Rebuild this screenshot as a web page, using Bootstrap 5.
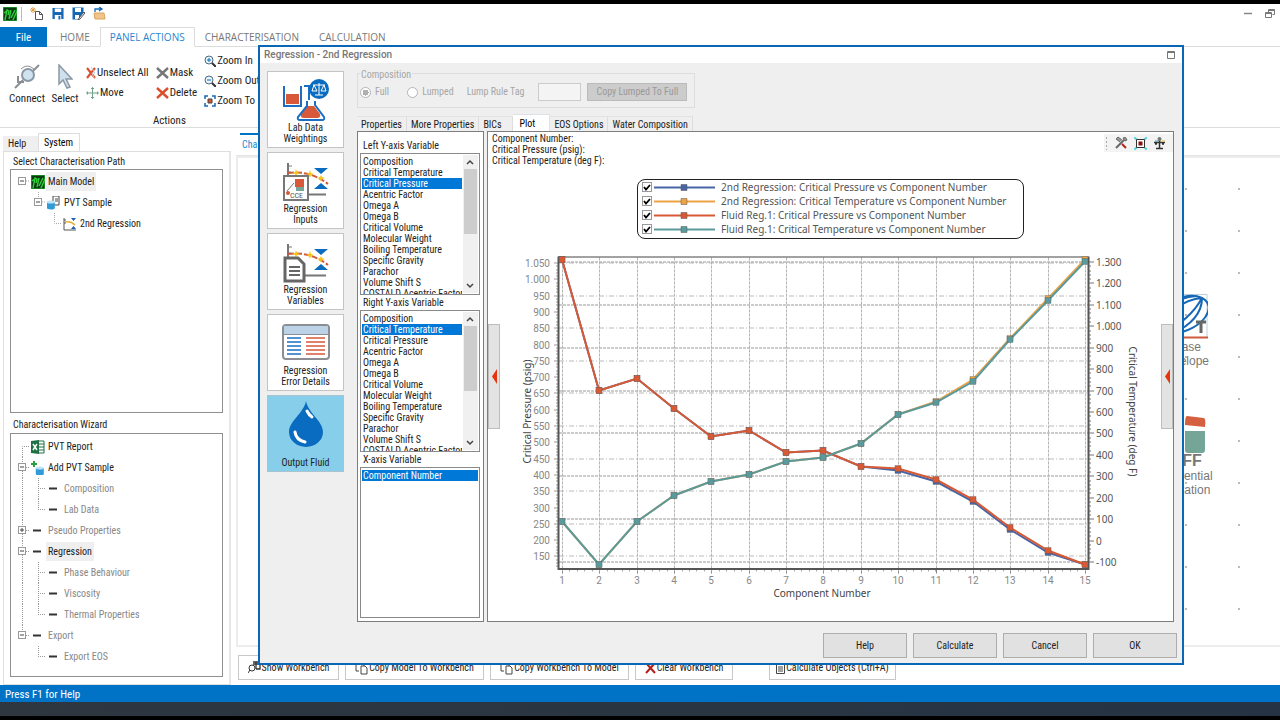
<!DOCTYPE html>
<html lang="en">
<head>
<meta charset="utf-8">
<meta name="viewport" content="width=device-width, initial-scale=1">
<title>Regression - 2nd Regression</title>
<link href="https://cdn.jsdelivr.net/npm/bootstrap@5.3.0/dist/css/bootstrap.min.css" rel="stylesheet">
<style>
:root{--ui:"Roboto Condensed","Roboto","Liberation Sans",sans-serif;--blue:#0173c7;--sel:#0078d7}
body{font:400 10px/12px var(--ui);color:#222;background:#fff;border-top:4px solid #000;border-bottom:4px solid #000;overflow:hidden}
button,input,select{font:inherit;color:inherit}
svg{display:block;flex:none}
.btn{--bs-btn-font-size:10px;--bs-btn-line-height:12px;--bs-btn-padding-x:0;--bs-btn-padding-y:0;--bs-btn-border-radius:0;--bs-btn-color:#222;font-family:var(--ui)}
/* application frame */
.quick{height:23px;padding:0 0 4px 3px}
.quick .sep{width:1px;height:14px;background:#bbb}
.win-icons{padding-right:4px;gap:13px}
.main-tabs{--bs-nav-tabs-border-color:#dcdcdc;--bs-nav-tabs-border-radius:0;--bs-nav-link-padding-x:9px;--bs-nav-link-padding-y:0;font:10px/20px "Open Sans","Roboto",sans-serif;height:20px}
.main-tabs .nav-link{color:#777;height:20px;line-height:19px;font-size:10px}
.main-tabs .nav-link.active{color:#2a86cf;border-color:#dcdcdc #dcdcdc #fff}
.main-tabs .file-tab{background:var(--blue);color:#fff;width:47px;font-family:var(--ui);font-size:11px}
.ribbon{height:81px;border-bottom:1px solid #dcdcdc;font-size:11px;padding-left:8px}
.ribbon .btn{--bs-btn-font-size:11px}
.rb-big{width:38px}
.rb-groups{height:67px;gap:5px}
.rb-col .btn{display:flex;align-items:center;gap:1px;height:20px;white-space:nowrap}
.left-dock{width:232px;padding:5px 0 0 3px}
.dock-tabs{--bs-nav-tabs-border-radius:0;--bs-nav-tabs-border-width:0;height:18px;align-items:end}
.dock-tabs .nav-link{padding:0 5px;height:15px;line-height:15px;background:#efefef;color:#222;font-size:10px;width:35px;text-align:left}
.dock-tabs .nav-link.active{height:18px;background:#fff;border:1px solid #ddd;border-bottom:0;width:42px;line-height:16px}
.dock-body{border:1px solid #dedede;border-right:2px solid #e6e6e6;padding:4px 6px 7px;margin-right:1px}
.dock-cap{padding-left:3px}
.tree-box{border:1px solid #8f8f8f;padding:1px 3px;list-style:none;margin:0}
.tree-box.wiz{height:244px;padding-top:2px}
.tree-box li{display:flex;height:21px;align-items:center}
.tree-box .ico{width:14px;margin:0 1px}
.tree-box .tx{padding:0 2px;line-height:19px}
.tree-box .off{color:#888}
.tree-box .on{background:#efefef}
.canvas-area{border:2px solid #ececec;border-right:0;background:radial-gradient(circle at 2px 2px,#bbb 1px,transparent 1px) right 43px top 29px/53px 42px;position:relative}
.canvas-head{height:28px;border-bottom:1px solid #e4e4e4;padding-left:4px}
.canvas-head a{color:#2a86cf;border-top:2px solid var(--blue);width:24px;height:22px;line-height:20px;padding-left:2px;text-decoration:none;font-size:10px}
.node{position:absolute;right:58px;font:12px/14px "Liberation Sans",sans-serif;color:#777;text-align:center;width:76px}
.node b{font-size:16px;line-height:15px}
.bench .btn{--bs-btn-border-color:#c8c8c8;height:25px;display:flex;align-items:center;justify-content:center;gap:1px}
.status{height:17px;background:var(--blue);color:#fff;font-size:11px;line-height:19px;padding-left:5px}
.taskbar{height:14px;background:linear-gradient(90deg,#2e3740,#253344)}
/* dialog */
.dlg{position:absolute;left:258px;top:45px;right:96px;bottom:55px;border:2px solid #0b66b5;background:#efefef;z-index:5}
.dlg-title{height:16px;background:#fff;padding:0 6px 0 4px;color:#777;font:500 10px/20px "Roboto",sans-serif}
.side{width:77px;gap:4px}
.tile{--bs-btn-border-color:#c4c4c4;--bs-btn-bg:#fff;height:77px;width:77px;line-height:11px;display:flex;flex-direction:column;align-items:center;justify-content:end;padding-bottom:3px;gap:0}
.tile.cur{--bs-btn-bg:#87ceeb;--bs-btn-border-color:#a9c4cf}
.grp{width:338px;height:35px;position:relative;border:1px solid #ddd;color:#a6a6a6}
.grp legend{font-size:10px;line-height:10px;position:absolute;top:-4px;left:2px;width:auto;background:#efefef;padding:0 1px;margin:0;float:none}
.grp-row{height:33px;padding:3px 0 0 2px}
.grp .form-check-input{width:11px;height:11px;margin:0;border:1px solid #b5b5b5;background:#fff;float:none;opacity:1}
.grp .form-check-input:checked{background:radial-gradient(circle,#b0b0b0 3px,#fff 3px)}
.grp .form-check-input[disabled]~label,.grp label{opacity:1}
.grp input[type=text]{width:43px;height:18px;border:1px solid #ccc;background:#f4f4f4;border-radius:0;padding:0 2px;min-height:0}
.grp .btn{--bs-btn-disabled-color:#999;--bs-btn-disabled-bg:#ccc;--bs-btn-disabled-border-color:#bbb;--bs-btn-disabled-opacity:1;width:100px;height:18px}
.pg-tabs{--bs-nav-tabs-border-radius:0;--bs-nav-tabs-border-width:0;height:17px;align-items:end}
.pg-tabs .nav-link{height:15px;line-height:15px;padding:0 4px;font-size:10px;color:#222;border-right:1px solid #ddd;border-top:1px solid #e2e2e2;text-align:left;white-space:nowrap}
.pg-tabs .nav-link.active{background:#fff;height:17px;width:37px;line-height:15px;padding-left:6px}
.pane{border:1px solid #7d7d7d;background:#fff}
.vars{width:127px;padding:6px 3px 3px 2px}
.vars label{padding-left:3px;height:15px;line-height:15px}
.lb{border:1px solid #8a8a8a;height:142px;display:flex;overflow:hidden}
.lb.fill{flex:1;height:auto}
.lb select{appearance:none;border:0;outline:0;background:#fff;padding:2px 1px 0;overflow:hidden;flex:1;min-width:0;height:100%;border-radius:0;scrollbar-width:none}
.lb select::-webkit-scrollbar{display:none}
.lb option{padding:0 1px;min-height:0;height:11px;line-height:11px;font-size:10px;overflow:hidden}
.lb option:checked{background:linear-gradient(var(--sel),var(--sel));-webkit-text-fill-color:#fff}
.sb{width:15px;background:#f0f0f0;margin:1px 1px 1px 0}
.sb .thumb{height:65px;background:#cdcdcd;margin:0 1px}
.plot-head{padding:1px 0 0 4px;line-height:11px}
.tools{background:#f3f3f3;height:18px;width:69px;margin-top:1px;gap:6px;padding-left:1px}
.legend-box{border:1px solid #222;border-radius:8px;width:387px;height:60px;padding:0 4px;margin:13px auto 0;font:10px/14px "Noto Sans","Open Sans",sans-serif;color:#555}
.legend-box .form-check-input{width:10px;height:10px;min-width:10px;margin:0;border:1px solid #999;border-radius:0;background:#fff}
.legend-box .form-check-input:checked{background:#fff url("data:image/svg+xml,%3Csvg xmlns='http://www.w3.org/2000/svg' viewBox='0 0 10 10'%3E%3Cpath d='M2 5l2 2.500L8 3' fill='none' stroke='%23000' stroke-width='1.800'/%3E%3C/svg%3E") center/10px}
.legend-box label{height:14px;gap:2px}
.grab{width:12px;height:105px;--bs-btn-bg:#e3e3e3;--bs-btn-border-color:#bdbdbd;margin-top:84px}
.chart{min-width:0;flex:1}
.chart svg{width:100%;height:100%}
.chart text{font:10px "Noto Sans",sans-serif;fill:#555}
.chart .lx{font-family:"Roboto","Liberation Sans",sans-serif;fill:#888}
.chart .ttl{font:10px "Noto Sans",sans-serif;fill:#444}
.foot{gap:6px;padding:11px 5px 5px}
.foot .btn{--bs-btn-bg:#e1e1e1;--bs-btn-border-color:#adadad;width:84px;height:25px}
</style>
</head>
<body class="d-flex flex-column vh-100">
<svg width="0" height="0" class="position-absolute">
<defs>
<g id="mn"><rect x="4.500" y="6.500" width="7" height="7" fill="#fff" stroke="#999"/><path d="M6 10h4" stroke="#444"/></g>
<g id="tri-plot"><path d="M6 2v33M6 33.500h38" stroke="#777" stroke-width="2" fill="none"/><path d="M6 5h4M6 11h3" stroke="#777"/><path d="M6 12q22-3 40 11" stroke="#cf5b3d" stroke-width="2" stroke-dasharray="6 2" fill="none"/><path d="M32 7h14l-7 6zM32 28h14l-7-6z" fill="#0a6cc0"/><path d="M14 8l1 3 3 1-3 1-1 3-1-3-3-1 3-1zM28 9l1 3 3 1-3 1-1 3-1-3-3-1 3-1zM39 14l1 2 3 1-3 1-1 3-1-3-3-1 3-1z" fill="#f5c518"/></g>
<g id="logo"><rect width="14" height="14" fill="#0b3a10"/><path d="M0 0h14v14H0z" fill="none" stroke="#28c83a"/><path d="M2 13l2-10 2 1-1 4M6 12l2-9M8 11l4-8M10 13l4-9M1 6l4-3" stroke="#2fd13a" stroke-width="1.400" fill="none"/></g>
<g id="drop"><path d="M1 5v8q5 3 10 0V5z" fill="#2f9bd8"/><ellipse cx="6" cy="5" rx="5" ry="2" fill="#bfe2f5"/></g>
<g id="pages"><path d="M4 2h5v3M1 1v9h3M4 2H1M6 5h4l2 2v6H6z" fill="none" stroke="#444"/></g>
</defs></svg>

<header class="quick d-flex align-items-center justify-content-between">
 <div class="d-flex align-items-center">
  <svg width="14" height="14" viewBox="0 0 14 14"><use href="#logo"/></svg>
  <span class="sep ms-1"></span>
  <svg class="ms-2" width="14" height="14" viewBox="0 0 14 14"><path d="M5.500 4.500h4l3 3v5h-7zM9.500 4.500v3h3" fill="#fff" stroke="#555"/><path d="M3 0v6M0 3h6M1 1l4 4M5 1L1 5" stroke="#e0a04a"/></svg>
  <svg class="ms-2" width="12" height="13" viewBox="0 0 13 13"><path d="M.500.500h12v12H.500z" fill="#1668b5"/><path d="M3 1h7v4H3zM3 8h7v5H3z" fill="#fff"/><path d="M7 9h2v4H7z" fill="#1668b5"/></svg>
  <svg class="ms-2" width="13" height="13" viewBox="0 0 13 13"><path d="M.500.500h11v6l-5 6h-6z" fill="#1668b5"/><path d="M3 1h6v4H3zM3 8h4v4H3z" fill="#fff"/><path d="M12 5l-5 6-1 2 2-1 5-6z" fill="#fff" stroke="#555"/></svg>
  <svg class="ms-2" width="13" height="13" viewBox="0 0 13 13"><path d="M1 6h10l1 6H2z" fill="#f1c588" stroke="#d9a45c"/><path d="M2 5V2h6M6 0l3 2-3 2" fill="none" stroke="#1668b5" stroke-width="1.300"/></svg>
 </div>
 <div class="win-icons d-flex align-items-center">
  <svg width="9" height="9" viewBox="0 0 9 9"><path d="M1 4.500h8" stroke="#888" stroke-width="1.500"/></svg>
  <svg width="11" height="10" viewBox="0 0 11 10"><path d="M3.500 3V.500h6v5H7.500M.500 3.500h6v5h-6zM.500 4.500h6M3.500 1.500h6" fill="none" stroke="#777"/></svg>
 </div>
</header>

<nav class="nav nav-tabs main-tabs">
 <button class="nav-link file-tab p-0 border-0">File</button>
 <button class="nav-link" style="padding-left:12px">HOME</button>
 <button class="nav-link active">PANEL ACTIONS</button>
 <button class="nav-link">CHARACTERISATION</button>
 <button class="nav-link">CALCULATION</button>
</nav>

<section class="ribbon d-flex">
 <div class="d-flex flex-column">
  <div class="rb-groups d-flex align-items-start">
   <div class="d-flex mt-3">
   <button class="btn rb-big"><svg width="26" height="25" viewBox="0 0 26 25" class="mx-auto"><path d="M1 24l8-8M18 8l7-7M4 12v6h6" stroke="#8b8f94" stroke-width="2" fill="none"/><circle cx="14" cy="11" r="6" fill="#cfe2f0" stroke="#8b98a3" stroke-width="2"/><path d="M7 5q6-6 13 0" stroke="#8b8f94" fill="none"/></svg><span class="d-block mt-1">Connect</span></button>
   <button class="btn rb-big"><svg width="16" height="25" viewBox="0 0 16 25" class="mx-auto"><path d="M2 1v19l4-4 4 8 3-1-4-8h6z" fill="#cfe0ec" stroke="#8b98a3" stroke-width="1.500"/></svg><span class="d-block mt-1">Select</span></button>
   </div>
   <div class="rb-col d-flex flex-column mt-3" style="margin-left:-4px">
    <button class="btn"><svg width="10" height="12" viewBox="0 0 10 12"><path d="M1 1l8 10M9 1L1 11" stroke="#d9512c" stroke-width="2.200"/><path d="M5 0l4 6-3 0 2 5" stroke="#c9cdd0" fill="none"/></svg>Unselect All</button>
    <button class="btn"><svg width="13" height="12" viewBox="0 0 13 12"><path d="M6.500 0v12M0 6h13M5 1.500h3M5 10.500h3M1.500 4.500v3M11.500 4.500v3" stroke="#6fa08a"/></svg>Move</button>
   </div>
   <div class="rb-col d-flex flex-column mt-3">
    <button class="btn"><svg width="13" height="12" viewBox="0 0 13 12"><path d="M1 1l11 10M12 1L1 11" stroke="#777" stroke-width="2.400"/></svg>Mask</button>
    <button class="btn"><svg width="13" height="12" viewBox="0 0 13 12"><path d="M1 1l11 10M12 1L1 11" stroke="#d9512c" stroke-width="2.400"/></svg>Delete</button>
   </div>
   <div class="rb-col d-flex flex-column mt-1">
    <button class="btn"><svg width="12" height="12" viewBox="0 0 12 12"><circle cx="5" cy="5" r="4" fill="#e8f3fa" stroke="#4a6b80"/><path d="M8 8l4 4" stroke="#333" stroke-width="2"/><path d="M3 5h4M5 3v4" stroke="#1668b5"/></svg>Zoom In</button>
    <button class="btn"><svg width="12" height="12" viewBox="0 0 12 12"><circle cx="5" cy="5" r="4" fill="#e8f3fa" stroke="#4a6b80"/><path d="M8 8l4 4" stroke="#333" stroke-width="2"/><path d="M3 5h4" stroke="#1668b5"/></svg>Zoom Out</button>
    <button class="btn"><svg width="12" height="12" viewBox="0 0 12 12"><path d="M1 4V1h3M8 1h3v3M11 8v3H8M4 11H1V8" fill="none" stroke="#1668b5" stroke-width="1.500"/><path d="M4 4h4v4H4z" fill="#d9512c" stroke="#444"/></svg>Zoom To</button>
   </div>
  </div>
  <div class="text-center" style="padding:1px 0 0 70px">Actions</div>
 </div>
</section>

<main class="d-flex flex-grow-1" style="min-height:0">
 <aside class="left-dock d-flex flex-column flex-shrink-0">
  <nav class="nav nav-tabs dock-tabs"><button class="nav-link">Help</button><button class="nav-link active">System</button></nav>
  <div class="dock-body d-flex flex-column flex-grow-1">
   <div class="dock-cap">Select Characterisation Path</div>
   <ul class="tree-box flex-grow-1" style="margin-top:1px">
    <li><svg width="16" height="21"><path d="M12 10h4" stroke="#aaa" stroke-dasharray="1 1"/><use href="#mn"/></svg><svg class="ico" width="14" height="14" viewBox="0 0 14 14"><use href="#logo"/></svg><span class="tx on">Main Model</span></li>
    <li><svg width="32" height="21"><path d="M24.500 0v6M28 10h4" stroke="#aaa" stroke-dasharray="1 1"/><use href="#mn" x="16"/></svg><svg class="ico" width="14" height="14" viewBox="0 0 14 14"><path d="M6 0h6v9H6z" fill="#fff" stroke="#444"/><path d="M8 3h3M8 5h3" stroke="#444"/><g transform="translate(-1 2) scale(.8)"><use href="#drop"/></g></svg><span class="tx">PVT Sample</span></li>
    <li><svg width="48" height="21"><path d="M40.500 0v10.500h8" fill="none" stroke="#aaa" stroke-dasharray="1 1"/></svg><svg class="ico" width="14" height="14" viewBox="0 0 14 14"><path d="M1 1v12h12M1 3h2M1 6h2" stroke="#555" fill="none"/><path d="M2 5q6-1 10 3" stroke="#e4b13c" stroke-width="1.500" fill="none"/><path d="M8 1h5l-2.500 3zM8 12h5l-2.500-3z" fill="#1a5fb0"/></svg><span class="tx">2nd Regression</span></li>
   </ul>
   <div class="dock-cap" style="height:20px;line-height:24px">Characterisation Wizard</div>
   <ul class="tree-box wiz" id="wizard"></ul>
  </div>
 </aside>
 <section class="d-flex flex-column flex-grow-1" style="padding-left:4px;min-width:0">
  <div class="canvas-head d-flex align-items-end"><a href="#">Cha</a></div>
  <div class="canvas-area flex-grow-1">
   <div class="node" style="top:136px">
    <svg width="62" height="46" viewBox="0 0 62 46" class="ms-auto me-3"><path d="M10 .500h51v43" fill="none" stroke="#b9cfe0"/><path d="M6 40C10 10 40-4 56 4S58 36 26 40zM10 40Q28 6 56 4M16 40Q44 26 56 4M26 40Q56 26 56 4M8 34Q20 4 50 2" fill="none" stroke="#1668b5" stroke-width="2"/><path d="M50 28h10M55 28v11" stroke="#666" stroke-width="3"/><path d="M0 43.500h62" stroke="#cf5b3d" stroke-width="2"/></svg>Phase<br>Envelope</div>
   <div class="node" style="top:258px">
    <svg width="32" height="37" viewBox="0 0 32 37" class="ms-auto me-3"><path d="M13 0l17 2q2 1 1 9L11 9q0-9 2-9z" fill="#d5603f"/><path d="M11 15h20v19q0 3-3 3H14q-3 0-3-3z" fill="#74a596"/></svg><b>DIFF</b><br>Differential<br>Liberation</div>
  </div>
  <div class="bench d-flex" style="padding:8px 2px 5px;gap:6px">
   <button class="btn" style="width:101px"><svg width="13" height="13" viewBox="0 0 13 13"><path d="M5 1h7v7H8M5 3h7M8 1v7" fill="none" stroke="#333" stroke-width="1.300"/><circle cx="4" cy="7" r="3" fill="none" stroke="#333"/><path d="M2 9l-2 3" stroke="#333"/></svg>Show Workbench</button>
   <button class="btn" style="width:139px"><svg width="13" height="14"><use href="#pages"/></svg>Copy Model To Workbench</button>
   <button class="btn" style="width:139px"><svg width="13" height="14"><use href="#pages"/></svg>Copy Workbench To Model</button>
   <button class="btn" style="width:98px"><svg width="11" height="12"><path d="M1 1l9 10M10 1L1 11" stroke="#b3211c" stroke-width="2"/></svg>Clear Workbench</button>
   <button class="btn" style="width:127px;margin-left:30px"><svg width="9" height="13"><path d="M.500.500h8v12h-8zM2 3h5M2 6h5M2 8h5M2 10h5" fill="none" stroke="#444"/></svg>Calculate Objects (Ctrl+A)</button>
  </div>
 </section>
</main>
<footer class="status">Press F1 for Help</footer>
<div class="taskbar"></div>

<div class="dlg d-flex flex-column" role="dialog" aria-label="Regression - 2nd Regression">
 <div class="dlg-title d-flex justify-content-between align-items-center"><span>Regression - 2nd Regression</span><svg width="9" height="8"><path d="M.500.500h7v7h-7zM0 1.500h8" fill="none" stroke="#777"/></svg></div>
 <div class="d-flex flex-grow-1" style="padding:8px 8px 0 7px;min-height:0">
  <div class="side d-flex flex-column">
   <button class="btn tile"><svg width="52" height="44" viewBox="0 0 52 44"><path d="M4 8v20h17V8M24 8h5v14" fill="none" stroke="#1a6fc4" stroke-width="2"/><path d="M6 16h13v10H6zM21 36l5-8h8l6 8q1 4-3 4H24q-4 0-3-4z" fill="#d8583a"/><path d="M27 23v5l-9 11q-1 3 2 3h22q3 0 2-3l-9-12v-4" fill="none" stroke="#1a6fc4" stroke-width="2"/><circle cx="39" cy="11" r="10" fill="#0a6cc0"/><path d="M39 5v12M35 17h8M33 7h12M34 7l-2 6h5zM44 7l-3 6h5z" fill="none" stroke="#fff"/></svg>Lab Data<br>Weightings</button>
   <button class="btn tile"><svg width="52" height="44" viewBox="0 0 52 44"><use href="#tri-plot" x="2" y="2"/><rect x="4" y="17" width="24" height="24" fill="#fff" stroke="#777" stroke-width="2"/><rect x="15" y="20" width="9" height="8" fill="#d8583a"/><path d="M7 32l7-8" stroke="#777"/><rect x="16" y="28" width="8" height="4" fill="#74a596"/><circle cx="8" cy="34" r="2" fill="#cf5b3d"/><text x="10" y="39" font-size="8" fill="#555">CCE</text></svg>Regression<br>Inputs</button>
   <button class="btn tile"><svg width="52" height="44" viewBox="0 0 52 44"><use href="#tri-plot" x="2" y="2"/><path d="M5 18h13l6 6v17H5z" fill="#fff" stroke="#666" stroke-width="3"/><path d="M9 27h11M9 31h11M9 35h11" stroke="#666" stroke-width="2"/></svg>Regression<br>Variables</button>
   <button class="btn tile"><svg width="50" height="44" viewBox="0 0 50 44"><rect x="2" y="4" width="46" height="34" rx="3" fill="#fff" stroke="#8b8f94" stroke-width="2"/><path d="M3 5h44v8H3z" fill="#bcd2e6"/><path d="M3 13.500h44" stroke="#8b8f94"/><path d="M6 17h14M6 21h14M6 25h14M6 29h14M6 33h14" stroke="#1a6fc4" stroke-width="1.500"/><path d="M25 17h19M25 21h19M25 25h19M25 29h19M25 33h19" stroke="#d8583a" stroke-width="1.500"/></svg>Regression<br>Error Details</button>
   <button class="btn tile cur"><svg width="40" height="58" viewBox="0 0 40 58"><path d="M20 2C22 14 37 22 37 33a17 15 0 0 1-34 0C3 22 18 14 20 2z" fill="#0a6cc0"/><path d="M21 12q2 4 5 6M9 33q1 8 10 10" stroke="#fff" stroke-width="3" stroke-linecap="round" fill="none"/></svg>Output Fluid</button>
  </div>
  <div class="d-flex flex-column flex-grow-1" style="padding-left:13px;min-width:0">
   <fieldset class="grp" style="margin-top:2px" disabled>
    <legend>Composition</legend>
    <div class="grp-row d-flex align-items-center">
    <input class="form-check-input" type="radio" name="c" id="rf" checked><label for="rf" class="ms-1">Full</label>
    <input class="form-check-input" style="margin-left:18px" type="radio" name="c" id="rl"><label for="rl" class="ms-1">Lumped</label>
    <label for="tag" style="margin-left:13px">Lump Rule Tag</label><input type="text" id="tag" style="margin-left:14px">
    <button class="btn" style="margin-left:6px" disabled>Copy Lumped To Full</button>
    </div>
   </fieldset>
   <nav class="nav nav-tabs pg-tabs" style="margin-top:6px">
    <button class="nav-link">Properties</button><button class="nav-link">More Properties</button><button class="nav-link" style="width:34px">BICs</button><button class="nav-link active">Plot</button><button class="nav-link">EOS Options</button><button class="nav-link">Water Composition</button>
   </nav>
   <div class="d-flex flex-grow-1" style="gap:3px;min-height:0">
    <div class="pane vars d-flex flex-column flex-shrink-0">
     <label for="ly">Left Y-axis Variable</label>
     <div class="lb"><select id="ly" size="13"><option>Composition<option>Critical Temperature<option selected>Critical Pressure<option>Acentric Factor<option>Omega A<option>Omega B<option>Critical Volume<option>Molecular Weight<option>Boiling Temperature<option>Specific Gravity<option>Parachor<option>Volume Shift S<option>COSTALD Acentric Factor</select>
      <div class="sb d-flex flex-column"><svg width="15" height="14"><path d="M4 9l3-3 3 3" fill="none" stroke="#444" stroke-width="1.500"/></svg><div class="thumb"></div><svg class="mt-auto" width="15" height="14"><path d="M4 5l3 3 3-3" fill="none" stroke="#444" stroke-width="1.500"/></svg></div></div>
     <label for="ry">Right Y-axis Variable</label>
     <div class="lb"><select id="ry" size="13"><option>Composition<option selected>Critical Temperature<option>Critical Pressure<option>Acentric Factor<option>Omega A<option>Omega B<option>Critical Volume<option>Molecular Weight<option>Boiling Temperature<option>Specific Gravity<option>Parachor<option>Volume Shift S<option>COSTALD Acentric Factor</select>
      <div class="sb d-flex flex-column"><svg width="15" height="14"><path d="M4 9l3-3 3 3" fill="none" stroke="#444" stroke-width="1.500"/></svg><div class="thumb"></div><svg class="mt-auto" width="15" height="14"><path d="M4 5l3 3 3-3" fill="none" stroke="#444" stroke-width="1.500"/></svg></div></div>
     <label for="xv">X-axis Variable</label>
     <div class="lb fill"><select id="xv" size="13"><option selected>Component Number</select></div>
    </div>
    <div class="pane d-flex flex-column flex-grow-1" style="min-width:0">
     <div class="plot-head d-flex justify-content-between">
      <div>Component Number:<br>Critical Pressure (psig):<br>Critical Temperature (deg F):</div>
      <div class="tools d-flex align-items-center">
       <svg width="3" height="14"><path d="M1.500 1v13" stroke="#aaa" stroke-dasharray="2 2"/></svg>
       <svg width="14" height="14"><path d="M2 12L10 4" stroke="#666" stroke-width="2"/><path d="M8 8l4 4" stroke="#b3211c" stroke-width="2"/><path d="M6 6L2 3l2-2 4 3M9 2q3-2 4 2l-2 1z" fill="#999" stroke="#666"/></svg>
       <svg width="13" height="13"><path d="M0 0l13 13M13 0L0 13" stroke="#59d6dd" stroke-width="2"/><path d="M2.500 2.500h8v8h-8z" fill="#fff" stroke="#333"/><path d="M4.500 4.500h4v4h-4z" fill="#8a1010"/></svg>
       <svg width="13" height="13"><path d="M1 5.500h11M6.500 1v10M3 11.500h7M2 7h2M9 7h2" stroke="#333" stroke-width="1.500"/><circle cx="6.500" cy="2" r="2" fill="#777"/><path d="M2 4h3" stroke="#2aa"/><path d="M9 4h3" stroke="#dc4"/></svg>
      </div>
     </div>
     <div class="legend-box flex-shrink-0" id="legend"></div>
     <div class="d-flex flex-grow-1" style="padding-top:1px;min-height:0">
      <button class="btn grab" aria-label="Show left panel"><svg width="9" height="16"><path d="M8 0v15L3 7.500z" fill="#e8340c"/></svg></button>
      <div class="chart"><svg id="chart" viewBox="1 0 661 380" role="img" aria-label="Critical properties by component number"></svg></div>
      <button class="btn grab" aria-label="Show right panel"><svg width="9" height="16"><path d="M8 0v15L3 7.500z" fill="#e8340c"/></svg></button>
     </div>
    </div>
   </div>
  </div>
 </div>
 <div class="foot d-flex justify-content-end">
  <button class="btn">Help</button><button class="btn">Calculate</button><button class="btn">Cancel</button><button class="btn">OK</button>
 </div>
</div>

<script src="https://cdn.jsdelivr.net/npm/bootstrap@5.3.0/dist/js/bootstrap.bundle.min.js"></script>
<script>
// Wizard tree: depth, root guide, box sign, label, style, icon
const dash='<svg class="ico" width="14" height="14"><path d="M2 6.500h8" stroke="#333" stroke-width="2"/></svg>';
const xls='<svg class="ico" width="14" height="14"><path d="M7 1h6v12H7z" fill="#fff" stroke="#1e7145"/><path d="M8 4h5M8 7h5M8 10h5" stroke="#1e7145"/><path d="M0 1l8-1v14l-8-1z" fill="#1e7145"/><path d="M2 4l4 6M6 4l-4 6" stroke="#fff" stroke-width="1.500"/></svg>';
const add='<svg class="ico" width="14" height="14"><path d="M3 0v6M0 3h6" stroke="#2e9e3f" stroke-width="2"/><g transform="translate(4 3) scale(.8)"><use href="#drop"/></g></svg>';
const rows=[[0,'first','','PVT Report','',xls],[0,'v','-','Add PVT Sample','',add],[1,'v','t','Composition','off',dash],[1,'v','l','Lab Data','off',dash],[0,'v','+','Pseudo Properties','off',dash],[0,'v','-','Regression','on',dash],[1,'v','t','Phase Behaviour','off',dash],[1,'v','t','Viscosity','off',dash],[1,'v','l','Thermal Properties','off',dash],[0,'last','-','Export','off',dash],[1,'','l','Export EOS','off',dash]];
wizard.innerHTML=rows.map(([d,g,k,t,c,i])=>{
 let p=g=='first'?'M8.500 21V10.500H16':g=='v'?'M8.500 0v21':g=='last'?'M8.500 0v10':'';
 if(d)p+='M24.500 0v'+(k=='t'?21:10)+'M24 10.500h8';else p+='M12 10.500h4';
 const box=!d&&k?'<use href="#mn"/>'+(k=='+'?'<path d="M8 8v4" stroke="#444"/>':''):'';
 return `<li><svg width="${16+16*d}" height="21"><path d="${p}" fill="none" stroke="#999" stroke-dasharray="1 1"/>${box}</svg>${i}<span class="tx ${c}">${t}</span></li>`}).join('');

const P=[1059,657,694,602,515,535,467,475,423,418,385,323,236,167,124];
const P2=[1059,657,694,602,515,535,467,475,423,411,377,316,231,162,124];
const T=[89,-114,89,208,273,306,369,385,453,584,640,742,934,1118,1300];
const T2=[89,-114,89,208,273,306,369,385,453,588,645,749,941,1127,1309];
const L=v=>Math.round(22+(1050-v)*.3261),R=v=>Math.round(21+(1300-v)*.2143),X=n=>Math.round(63+(n-1)*37.35);
const series=[['2nd Regression: Critical Pressure','#4865a5',P2,L],['2nd Regression: Critical Temperature','#eda344',T2,R],['Fluid Reg.1: Critical Pressure','#d75a35',P,L],['Fluid Reg.1: Critical Temperature','#5a999c',T,R]];
legend.innerHTML=series.map(([n,c],i)=>`<label class="d-flex align-items-center" for="s${i}"><input class="form-check-input" type="checkbox" id="s${i}" checked><svg width="61" height="10" class="me-1"><path d="M0 5.500h61" stroke="${c}" stroke-width="2"/><path d="M27 2.500h6v6h-6z" fill="${c}" stroke="#555" stroke-width=".5"/></svg>${n} vs Component Number</label>`).join('');
const fmt=v=>Math.abs(v)>=1000?'1.'+String(v%1000).padStart(3,'0'):v;
let s='';
for(let v=150;v<=1050;v+=100)s+=`<path d="M60 ${L(v)}.5H590" stroke="#bbb" stroke-dasharray="5 2 1 2"/>`;
for(let v=-100;v<=1300;v+=200)s+=`<path d="M60 ${R(v)}.5H590" stroke="#999" stroke-dasharray="3 1"/>`;
for(let n=1;n<=15;n++)s+=`<path d="M${X(n)}.5 17V328" stroke="#b4b4b4" stroke-dasharray="3 1"/><path d="M${X(n)}.5 328v5" stroke="#888"/><text class="lx" x="${X(n)}" y="343" text-anchor="middle">${n}</text>`;
for(let v=120;v<=1050;v+=10)s+=`<path d="M${v%50?57:55} ${L(v)}.5H59" stroke="#999"/>`;
for(let v=150;v<=1050;v+=50)s+=`<text class="lx" x="51" y="${L(v)+4}" text-anchor="end">${fmt(v)}</text>`;
for(let v=-100;v<=1300;v+=20)s+=`<path d="M590 ${R(v)}.5h${v%100?2:5}" stroke="#777"/>`;
for(let v=-100;v<=1300;v+=100)s+=`<text x="597" y="${R(v)+4}">${fmt(v)}</text>`;
for(let n=1;n<15;n+=.2)s+=`<path d="M${X(n)}.5 328v3" stroke="#aaa"/>`;
s+='<path d="M59.500 16.500H589" stroke="#444" stroke-width="1"/><path d="M59.500 16v312.500H589.500V16" fill="none" stroke="#555" stroke-width="2"/>';
for(const [,c,d,f] of series){s+=`<polyline points="${d.map((v,i)=>X(i+1)+','+f(v)).join(' ')}" fill="none" stroke="${c}" stroke-width="2"/>`+d.map((v,i)=>`<rect x="${X(i+1)-3}" y="${f(v)-3}" width="6" height="6" fill="${c}" stroke="#555" stroke-width=".3"/>`).join('')}
s+='<text class="ttl" x="323" y="356" text-anchor="middle">Component Number</text><text class="ttl" transform="translate(32 171) rotate(-90)" text-anchor="middle">Critical Pressure (psig)</text><text class="ttl" transform="translate(630 171) rotate(90)" text-anchor="middle">Critical Temperature (deg F)</text>';
chart.innerHTML=s;
</script>
</body>
</html>
